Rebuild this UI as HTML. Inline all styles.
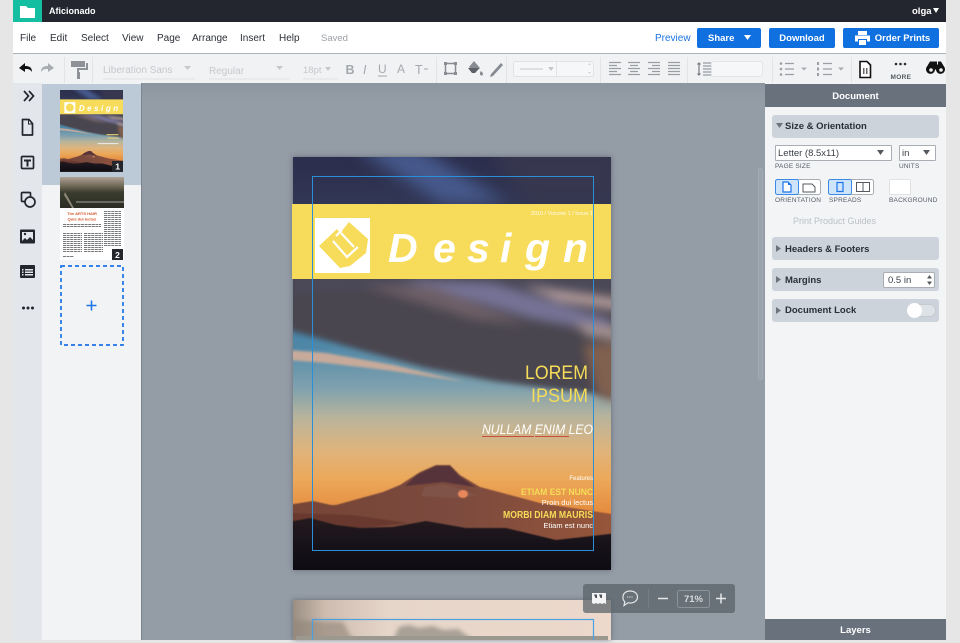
<!DOCTYPE html>
<html><head><meta charset="utf-8"><title>Aficionado</title>
<style>
html,body{margin:0;padding:0;width:960px;height:640px;overflow:hidden;background:#e6e6e6;font-family:"Liberation Sans",sans-serif}
.a{position:absolute}
.t{position:absolute;white-space:nowrap;line-height:1}
#top{left:13px;top:0;width:933px;height:22px;background:#23262f}
#menu{left:13px;top:22px;width:933px;height:31px;background:#fff;border-bottom:1px solid #b0b4b8}
#tool{left:13px;top:54px;width:933px;height:29px;background:#f1f2f4}
#rail{left:13px;top:83px;width:29px;height:557px;background:#e3e7ec}
#thumbs{left:42px;top:83px;width:100px;height:557px;background:#f1f3f5;border-right:1px solid #7d8590;box-sizing:border-box}
#canvas{left:142px;top:83px;width:623px;height:557px;background:#949ca6;overflow:hidden}
#right{left:765px;top:83px;width:181px;height:557px;background:#f2f4f6}
.btn{position:absolute;top:28px;height:20px;background:#1070e0;border-radius:2px;color:#fff;font-size:9.5px;font-weight:bold;line-height:21px;text-align:center}
.m{font-size:10px;color:#2c3038;top:34px}
.sec{position:absolute;left:772px;width:167px;height:23px;background:#ccd3da;border-radius:3px}
.sl{font-size:9.5px;font-weight:bold;color:#2a303a;left:785px}
.cap{font-size:6.5px;color:#555c66;letter-spacing:.2px}
.sel{position:absolute;background:#fff;border:1px solid #a9aeb4;box-sizing:border-box;border-radius:1px}
.ph{position:absolute;width:318px;height:413px;overflow:hidden;background:linear-gradient(#2b2e4c 0%,#3c4562 30%,#4b86a8 44%,#7fa1ae 56%,#b8b49c 63%,#dfb47c 71%,#eca85a 78%,#e58c3e 86%,#c06a30 100%)}
.ph svg{position:absolute;left:0;top:0;overflow:visible}
</style></head><body>
<div class="a" id="top"></div>
<div class="a" style="left:13px;top:0;width:29px;height:22px;background:#13bfa0"></div>
<svg class="a" style="left:19px;top:4px" width="18" height="14"><path d="M1 2h6l2 2h7v10H1z" fill="#fff"/></svg>
<div class="t" style="left:49px;top:7px;font-size:9px;font-weight:bold;color:#fff">Aficionado</div>
<div class="t" style="left:912px;top:7px;font-size:9.500px;font-weight:bold;color:#fff">olga</div>
<svg class="a" style="left:932px;top:8px" width="8" height="6"><path d="M1 0h6L4 5z" fill="#fff"/></svg>

<div class="a" id="menu"></div>
<div class="t m" style="left:20px">File</div>
<div class="t m" style="left:50px">Edit</div>
<div class="t m" style="left:81px">Select</div>
<div class="t m" style="left:122px">View</div>
<div class="t m" style="left:157px">Page</div>
<div class="t m" style="left:192px">Arrange</div>
<div class="t m" style="left:240px">Insert</div>
<div class="t m" style="left:279px">Help</div>
<div class="t m" style="left:321px;color:#9a9ea4;font-size:9.5px">Saved</div>
<div class="t m" style="left:655px;color:#1a73e0">Preview</div>
<div class="btn" style="left:697px;width:64px;text-align:left;text-indent:11px">Share</div>
<svg class="a" style="left:743px;top:35px" width="9" height="6"><path d="M1 0h7L4.500 5z" fill="#fff"/></svg>
<div class="btn" style="left:769px;width:66px">Download</div>
<div class="btn" style="left:843px;width:96px;text-indent:23px">Order Prints</div>
<svg class="a" style="left:855px;top:31px" width="15" height="14"><path d="M3 0h9v4H3zM0 4.500h15v6h-3V8H3v2.500H0zM4 9h7v5H4z" fill="#fff"/></svg>

<div class="a" id="tool"></div>
<svg class="a" style="left:0;top:54px" width="960" height="30" font-family="Liberation Sans, sans-serif">
<g stroke="#e2e4e7"><path d="M64.500 3v26M92.500 3v26M436.500 3v26M506.500 3v26M600.500 3v26M687.500 3v26M772.500 3v26M851.500 3v26"/></g>
<path d="M19 14l6-5v3c4 0 7 1 7 6-2-3-4-3-7-3v3z" fill="#111"/>
<path d="M54 14l-6-5v3c-4 0-7 1-7 6 2-3 4-3 7-3v3z" fill="#a9adb2"/>
<path d="M71 7h14v6H71zM86 9h2v7h-9v2h-2v-4h9zM77 18h3v7h-3z" fill="#8e9298"/>
<text x="103" y="19" font-size="10" fill="#c6c8cc">Liberation Sans</text>
<path d="M184 12h7l-3.500 4z" fill="#c6c8cc"/>
<path d="M103 25h92" stroke="#e0e2e5"/>
<text x="209" y="20" font-size="10" fill="#c6c8cc">Regular</text>
<path d="M276 12h7l-3.500 4z" fill="#c6c8cc"/>
<path d="M209 25h80" stroke="#e0e2e5"/>
<text x="303" y="19" font-size="9.500" fill="#c6c8cc">18pt</text>
<path d="M325 13h6l-3 4z" fill="#c6c8cc"/>
<path d="M303 25h35" stroke="#e0e2e5"/>
<text x="345.500" y="20" font-size="12.500" font-weight="bold" fill="#a5a9ae">B</text>
<text x="363" y="20" font-size="12.500" font-style="italic" fill="#a5a9ae">I</text>
<text x="378" y="19" font-size="12" fill="#a5a9ae">U</text><path d="M378 22h9" stroke="#a5a9ae"/>
<text x="397" y="19" font-size="12" fill="#a5a9ae">A</text>
<text x="415" y="20" font-size="12.500" fill="#a5a9ae">T</text><path d="M424 15h4" stroke="#a5a9ae"/>
<path d="M445.500 9.500h10v10h-10z" fill="none" stroke="#888c92" stroke-width="1.500"/><path d="M444 8h3v3h-3zM454 8h3v3h-3zM444 18h3v3h-3zM454 18h3v3h-3z" fill="#888c92"/>
<path d="M474 7l6 7-5 5-6-6zM481 17c1 1 2 2 2 3a1.500 1.500 0 0 1-3 0c0-1 0-2 1-3z" fill="#888c92"/><path d="M468 14h11l-4 5h-3z" fill="#5e6268"/>
<path d="M491 20l10-11 2 2-10 11-3 1z" fill="#888c92"/>
<rect x="513.500" y="7.500" width="80" height="15" rx="2" fill="#f6f7f8" stroke="#e0e2e5"/><path d="M556.500 8v14" stroke="#e0e2e5"/>
<path d="M520 15h23" stroke="#c4c7cb"/><path d="M548 13h6l-3 4z" fill="#c4c7cb"/>
<path d="M588 11l1.500-2 1.500 2zM588 18l1.500 2 1.500-2z" fill="#cfd2d6"/>
<g stroke="#9a9ea4" stroke-width="1.200" fill="none">
<path d="M609 9h12M609 12h8M609 15h12M609 18h8M609 21h12" transform="translate(0,-.5)"/>
<path d="M628 9h12M630 12h8M628 15h12M630 18h8M628 21h12" transform="translate(0,-.5)"/>
<path d="M648 9h12M652 12h8M648 15h12M652 18h8M648 21h12" transform="translate(0,-.5)"/>
<path d="M668 9h12M668 12h12M668 15h12M668 18h12M668 21h12" transform="translate(0,-.5)"/>
<path d="M703 9h9M703 12h9M703 15h9M703 18h9M703 21h9"/>
<path d="M699 9v12M697.500 10.500L699 9l1.500 1.500M697.500 19.500L699 21l1.500-1.500" stroke="#777b82"/>
<path d="M785 9.500h9M785 15h9M785 20.500h9M823 9.500h9M823 15h9M823 20.500h9"/>
</g>
<rect x="711.500" y="7.500" width="51" height="15" rx="2" fill="#f6f7f8" stroke="#e4e6e9"/>
<g fill="#9a9ea4"><circle cx="781" cy="9.500" r="1.300"/><circle cx="781" cy="15" r="1.300"/><circle cx="781" cy="20.500" r="1.300"/><rect x="817" y="8" width="2" height="3"/><rect x="817" y="13.500" width="2" height="3"/><rect x="817" y="19" width="2" height="3"/></g>
<path d="M801 13.500h6l-3 3zM838 13.500h6l-3 3z" fill="#a9adb2"/>
<path d="M860 7.500h7l3.500 3.500v12.500H860z" fill="#fff" stroke="#111" stroke-width="1.600"/><path d="M863 14h1.500v6H863zM866 14h1.500v6H866z" fill="#666"/>
<g fill="#2a2d33"><circle cx="896" cy="10" r="1.300"/><circle cx="900.500" cy="10" r="1.300"/><circle cx="905" cy="10" r="1.300"/></g>
<text x="890.500" y="25" font-size="6.500" font-weight="bold" fill="#555a61" letter-spacing=".3">MORE</text>
<path d="M931 8h3v3h1V8h3l3 5a4.500 4.500 0 1 1-8 3h-1a4.500 4.500 0 1 1-8-3l3-5z" fill="#111" transform="translate(3,-.5)"/>
<circle cx="931" cy="17" r="1.800" fill="#f1f2f4" transform="translate(0,-1)"/><circle cx="941" cy="17" r="1.800" fill="#f1f2f4" transform="translate(0,-1)"/>
</svg>

<div class="a" id="canvas"></div>
<div class="a" style="left:142px;top:83px;width:623px;height:18px;background:linear-gradient(#8d95a0,#949ca6)"></div>
<div class="a" id="rail"></div>
<svg class="a" style="left:13px;top:83px" width="29" height="240">
<g fill="none" stroke="#23262d" stroke-width="1.700">
<path d="M11 8l4.500 5-4.500 5M16 8l4.500 5-4.500 5"/>
<path d="M9.500 36.500h6.500l3.500 4v11.500H9.500z" stroke-linejoin="round"/><path d="M15.500 36.500v4.500h4" stroke-width="1"/>
<rect x="8.500" y="73.500" width="12" height="12" rx="1"/>
<rect x="8.500" y="109.500" width="9" height="9" rx="1"/>
<circle cx="17" cy="119" r="5" fill="#e3e7ec"/>
</g>
<path d="M11 76.500h7v2h-2.500v5h-2v-5H11z" fill="#23262d"/>
<path d="M8 146.500h13a1 1 0 0 1 1 1v12a1 1 0 0 1-1 1H8a1 1 0 0 1-1-1v-12a1 1 0 0 1 1-1z" fill="#23262d"/>
<path d="M9 149h11v8l-3-3-3 3-2-2-3 3z" fill="#e3e7ec"/><circle cx="12" cy="151" r="1.200" fill="#23262d"/>
<path d="M8 182h13a1 1 0 0 1 1 1v11a1 1 0 0 1-1 1H8a1 1 0 0 1-1-1v-11a1 1 0 0 1 1-1z" fill="#23262d"/>
<path d="M9 186h1.500v1.500H9zM12 186h8v1.500h-8zM9 188.500h1.500v1.500H9zM12 188.500h8v1.500h-8zM9 191h1.500v1.500H9zM12 191h8v1.500h-8z" fill="#e3e7ec"/>
<g fill="#23262d"><circle cx="10.500" cy="225" r="1.500"/><circle cx="15" cy="225" r="1.500"/><circle cx="19.500" cy="225" r="1.500"/></g>
</svg>

<div class="a" id="thumbs"></div>
<div class="a" style="left:42px;top:84px;width:99px;height:101px;background:#bccad8"></div>

<svg class="a" style="left:0;top:0" width="0" height="0">
<defs>
<linearGradient id="mt" x1="0" y1="0" x2="1" y2="0"><stop offset="0" stop-color="#774537"/><stop offset=".5" stop-color="#7c4a3e"/><stop offset="1" stop-color="#96563a"/></linearGradient>
<linearGradient id="ridge" gradientUnits="userSpaceOnUse" x1="0" y1="361" x2="0" y2="413"><stop offset="0" stop-color="#251a1e"/><stop offset=".5" stop-color="#17121a"/><stop offset="1" stop-color="#0e0c12"/></linearGradient>
<g id="far"><path d="M60 -10L125 -10L215 47H150z" fill="#46598c"/><path d="M195 -10h130v57H235z" fill="#37374f"/></g>
<g id="cloud"><path d="M-30 110H350V241L317 238L267 233L200 224L133 211L67 193L0 174L-30 165z" fill="#4a464f"/></g>
<g id="bands">
<path d="M-10 120H330V132L200 140L60 132L-10 138z" fill="#4b4959"/>
<path d="M105 122L200 126L318 162V176L240 162z" fill="#757295"/>
<path d="M70 128L140 130L235 168L180 162z" fill="#6e5f66"/>
<path d="M230 128L330 142V154L265 144z" fill="#b39c9c"/>
<path d="M280 166L330 170V184L295 179z" fill="#a69290"/>
<path d="M290 188L340 184V248L305 240z" fill="#80604f"/>
</g>
<g id="streak">
<path d="M-5 193L33 196L100 208L172 225L100 214L33 206L-5 203z" fill="#c8aa9a"/>
<path d="M-5 181L40 192L-5 192z" fill="#4f86a6"/>
</g>
<g id="mount">
<path d="M-5 348L20 344L38 348L43 348L90 335L107 328L127 315L143 308L157 308L167 318L187 330L217 338L247 346L325 358V420H-5z" fill="url(#mt)"/>
<path d="M124 318L143 309L157 309L166 319L182 330L150 325L112 329z" fill="#56333a"/>
<path d="M132 330L150 327L172 333L184 339L160 341L128 339z" fill="#7f5348"/>
<path d="M-5 356L60 358L115 366L60 372H-5z" fill="#69392f"/>
<ellipse cx="170" cy="337" rx="5" ry="4" fill="#e8875a"/>
<path d="M-5 365L17 361L43 368L67 371L100 370L133 364L173 371L213 371L263 383L325 376V420H-5z" fill="url(#ridge)"/>
</g>
</defs>
</svg>

<!-- thumb 1 -->
<div class="a" style="left:60px;top:90px;width:63px;height:82px;overflow:hidden">
<div class="ph" style="left:0;top:0;transform:scale(.1981);transform-origin:0 0">
<svg width="318" height="413" style="filter:blur(8px)"><use href="#far"/></svg>
<svg width="318" height="413" style="filter:blur(3px)"><use href="#cloud"/></svg>
<svg width="318" height="413" style="filter:blur(5px)"><use href="#bands"/></svg>
<svg width="318" height="413" style="filter:blur(1.2px)"><use href="#streak"/></svg>
<svg width="318" height="413" style="filter:blur(.6px)"><use href="#mount"/></svg>
</div>
<svg class="a" style="left:0;top:0" width="63" height="82" viewBox="0 0 318 413">
<rect y="47" width="318" height="75" fill="#f7dc5c"/>
<rect x="22" y="61" width="55" height="55" fill="#fff"/>
<circle cx="50" cy="88" r="20" fill="#f7dc5c"/>
<text x="95" y="106" font-size="40" font-weight="bold" font-style="italic" fill="#fff" letter-spacing="13">Design</text>
<rect x="262" y="358" width="56" height="55" fill="#24262c"/>
<text x="279" y="402" font-size="44" font-weight="bold" fill="#fff">1</text>
<path d="M235 225h60M240 242h55" stroke="#e6d070" stroke-width="6"/><path d="M190 270h105" stroke="#eee" stroke-width="5"/>
</svg>
</div>
<!-- thumb 2 -->
<svg class="a" style="left:60px;top:177px" width="64" height="83" viewBox="0 0 64 83">
<rect width="64" height="83" fill="#fff"/>
<defs><linearGradient id="f2" x1="0" y1="0" x2="0" y2="1"><stop offset="0" stop-color="#b0a294"/><stop offset=".3" stop-color="#6d6655"/><stop offset=".5" stop-color="#3a3c2e"/><stop offset="1" stop-color="#2b2d24"/></linearGradient></defs>
<rect width="64" height="31" fill="url(#f2)"/>
<path d="M16 24h48v2H16z" fill="#6b6a60"/><path d="M5 15L14 31h-2L4 18z" fill="#8c8676"/>
<text x="22" y="38" font-size="4" fill="#d6582a" text-anchor="middle" font-weight="bold">The ARTS HAIR</text>
<text x="22" y="43.500" font-size="4" fill="#d6582a" text-anchor="middle" font-weight="bold">Quis dui lectus</text>
<g stroke="#55585c" stroke-width="1" stroke-dasharray="3 .6" opacity=".8">
<path d="M3 47.500h38M3 49.500h38M3 56.500h19M3 58.500h19M3 60.500h19M3 62.500h19M3 64.500h19M3 66.500h19M3 68.500h19M3 70.500h19M3 72.500h19M3 74.500h19M24 56.500h19M24 58.500h19M24 60.500h19M24 62.500h19M24 64.500h19M24 66.500h19M24 68.500h19M24 70.500h19M24 72.500h19M24 74.500h19M44 34.500h17M44 36.500h17M44 38.500h17M44 40.500h17M44 42.500h17M44 44.500h17M44 46.500h17M44 48.500h17M44 50.500h17M44 52.500h17M44 54.500h17M44 56.500h17M44 58.500h17M44 60.500h17M44 62.500h17M44 64.500h17M44 66.500h17M44 68.500h17M3 79.500h11"/>
</g>
<rect x="52" y="72" width="11" height="11" fill="#24262c"/>
<text x="57.500" y="81" font-size="8.500" font-weight="bold" fill="#fff" text-anchor="middle">2</text>
</svg>
<!-- add page -->
<svg class="a" style="left:60px;top:265px" width="64" height="81">
<rect x="1" y="1" width="62" height="79" fill="none" stroke="#1a73e8" stroke-width="1.700" stroke-dasharray="4 3"/>
<path d="M26.500 40.500h10M31.500 35.500v10" stroke="#1a73e8" stroke-width="1.500"/>
</svg>

<!-- scrollbar -->
<div class="a" style="left:758px;top:168px;width:5px;height:212px;background:#9aa2ac;border-radius:3px;border:1px solid #a4abb4;box-sizing:border-box"></div>

<!-- cover -->
<div class="a" style="left:293px;top:157px;width:318px;height:413px;box-shadow:0 0 5px rgba(60,66,75,.55)"></div>
<div class="ph" style="left:293px;top:157px">
<svg width="318" height="413" style="filter:blur(8px)"><use href="#far"/></svg>
<svg width="318" height="413" style="filter:blur(3px)"><use href="#cloud"/></svg>
<svg width="318" height="413" style="filter:blur(5px)"><use href="#bands"/></svg>
<svg width="318" height="413" style="filter:blur(1.2px)"><use href="#streak"/></svg>
<svg width="318" height="413" style="filter:blur(.6px)"><use href="#mount"/></svg>
</div>
<svg class="a" style="left:292px;top:157px" width="320" height="414" font-family="Liberation Sans, sans-serif">
<rect x="0" y="47" width="319" height="75" fill="#f7dc5c"/>
<rect x="23" y="61" width="55" height="55" fill="#fff"/>
<path d="M27 89L45 72L48 76L53 70L57 65L76 82L74 96L58 109L48 111z" fill="#f7dc5c"/>
<path d="M41 84L55 100L66 90M49 76L62 90M44 79L50 73" stroke="#fff" stroke-width="2.200" fill="none"/>
<text x="96 141 175 208 233 271" y="105" font-size="41" font-weight="bold" font-style="italic" fill="#fff">Design</text>
<text x="301" y="58" font-size="5.500" fill="#fff" fill-opacity=".85" text-anchor="end">2016 / Volume 1 / Issue 1</text>
<text x="233" y="222" font-size="19.500" fill="#f6dc58" textLength="63" lengthAdjust="spacingAndGlyphs">LOREM</text>
<text x="239" y="245" font-size="19.500" fill="#f6dc58" textLength="57" lengthAdjust="spacingAndGlyphs">IPSUM</text>
<text x="190" y="277" font-size="13.500" font-style="italic" fill="#fff" textLength="111" lengthAdjust="spacingAndGlyphs">NULLAM ENIM LEO</text>
<path d="M190 279.500h52M243 279.500h34" stroke="#c8503c" stroke-width="1"/>
<text x="301" y="323" font-size="6" fill="#fff" text-anchor="end">Features</text>
<text x="229" y="338" font-size="9.500" font-weight="bold" fill="#f6dc58" textLength="72" lengthAdjust="spacingAndGlyphs">ETIAM EST NUNC</text>
<text x="301" y="348" font-size="7.500" fill="#fff" text-anchor="end">Proin dui lectus</text>
<text x="211" y="361" font-size="10" font-weight="bold" fill="#f6dc58" textLength="90" lengthAdjust="spacingAndGlyphs">MORBI DIAM MAURIS</text>
<text x="301" y="371" font-size="7.500" fill="#fff" text-anchor="end">Etiam est nunc</text>
<rect x="20.500" y="19.500" width="281" height="374" fill="none" stroke="#2a8fd8" stroke-width="1"/>
</svg>

<!-- second page -->
<div class="a" style="left:293px;top:600px;width:318px;height:40px;box-shadow:0 0 5px rgba(60,66,75,.55)"></div>
<div class="a" style="left:293px;top:600px;width:318px;height:40px;overflow:hidden;background:linear-gradient(90deg,#9a8e82 0%,#cdbcaf 10%,#e6d5c9 30%,#ecd9cc 100%)">
<svg class="a" style="left:0;top:0;overflow:visible;filter:blur(2px)" width="318" height="40">
<path d="M100 40L106 27L116 25L126 28L140 26L150 30L165 29L180 40z" fill="#a89f95"/>
<path d="M0 20L50 22L60 40H0z" fill="#8f8478" fill-opacity=".6"/>
</svg>
</div>
<svg class="a" style="left:293px;top:600px" width="318" height="40">
<rect x="3" y="36" width="312" height="4" fill="#9b9890"/>
<rect x="19.500" y="19.500" width="281" height="30" fill="none" stroke="#4aa0e0" stroke-width="1.200"/>
</svg>

<!-- zoom bar -->
<div class="a" style="left:583px;top:584px;width:152px;height:29px;background:rgba(88,95,103,.72);border-radius:3px"></div>
<svg class="a" style="left:583px;top:584px" width="152" height="29" font-family="Liberation Sans, sans-serif">
<path d="M9 9h14v11l-2 -1-2 1-2-1-2 1-2-1-2 1-2-1z" fill="#f4f4f4"/><path d="M11 10.500h3v3.500h-1.500zM16 10.500h3v3.500h-1.500z" fill="#4d525a"/>
<path d="M47 7c4.500 0 7.500 2.500 7.500 6s-3 6-7.500 6c-.7 0-1.400 0-2-.2L41 21.500l.8-4C40 16.500 40 15 40 13c0-3.500 3-6 7-6z" fill="none" stroke="#e4e6e8" stroke-width="1.200"/>
<path d="M44 13h6" stroke="#e4e6e8" stroke-dasharray="1.200 1"/>
<path d="M65.500 5v19" stroke="#777d85"/>
<path d="M75 14.500h10" stroke="#e4e6e8" stroke-width="1.500"/>
<rect x="94.500" y="6.500" width="32" height="17" rx="2" fill="none" stroke="#8d939a"/>
<text x="110.500" y="18" font-size="9.500" font-weight="bold" fill="#d8dbde" text-anchor="middle">71%</text>
<path d="M133 14.500h10M138 9.500v10" stroke="#e4e6e8" stroke-width="1.500"/>
</svg>

<!-- right panel -->
<div class="a" id="right"></div>
<div class="a" style="left:765px;top:84px;width:181px;height:23px;background:#69717d;color:#fff;font-size:9.500px;font-weight:bold;line-height:25px;text-align:center">Document</div>
<div class="sec" style="top:115px"></div>
<svg class="a" style="left:776px;top:123px" width="8" height="6"><path d="M0 0h7L3.500 5z" fill="#6d747d"/></svg>
<div class="t sl" style="top:122px">Size &amp; Orientation</div>
<div class="sel" style="left:775px;top:145px;width:117px;height:16px"></div>
<div class="t" style="left:778px;top:148.500px;font-size:9.500px;color:#3a3e45">Letter (8.5x11)</div>
<svg class="a" style="left:877px;top:150px" width="8" height="6"><path d="M0 0h7L3.500 5z" fill="#555a61"/></svg>
<div class="sel" style="left:899px;top:145px;width:37px;height:16px"></div>
<div class="t" style="left:902px;top:148.500px;font-size:9.500px;color:#3a3e45">in</div>
<svg class="a" style="left:923px;top:150px" width="8" height="6"><path d="M0 0h7L3.500 5z" fill="#555a61"/></svg>
<div class="t cap" style="left:775px;top:164px">PAGE SIZE</div>
<div class="t cap" style="left:899px;top:164px">UNITS</div>
<svg class="a" style="left:775px;top:179px" width="140" height="17">
<rect x=".5" y=".5" width="45" height="15" rx="2" fill="#fff" stroke="#a9aeb4"/>
<rect x=".5" y=".5" width="23" height="15" rx="2" fill="#cde4fb" stroke="#3a8ae6"/>
<path d="M8 3h5l3 3v7H8z" fill="#fff" stroke="#1a73e8" stroke-width="1.200"/><path d="M13 3v3h3z" fill="#1a73e8"/>
<path d="M28 5h9l3 3v5H28z" fill="#fff" stroke="#555a61"/>
<rect x="53.500" y=".5" width="45" height="15" rx="2" fill="#fff" stroke="#a9aeb4"/>
<rect x="53.500" y=".5" width="23" height="15" rx="2" fill="#cde4fb" stroke="#3a8ae6"/>
<rect x="62" y="3.500" width="6" height="9" fill="none" stroke="#1a73e8" stroke-width="1.200"/>
<rect x="81.500" y="3.500" width="13" height="9" fill="none" stroke="#555a61"/><path d="M88 3.500v9" stroke="#555a61"/>
<rect x="114.500" y=".5" width="21" height="15" fill="#fff" stroke="#e0e3e6"/>
</svg>
<div class="t cap" style="left:775px;top:198px;letter-spacing:.25px">ORIENTATION</div>
<div class="t cap" style="left:829px;top:198px">SPREADS</div>
<div class="t cap" style="left:889px;top:198px">BACKGROUND</div>
<div class="t" style="left:793px;top:217px;font-size:9px;color:#bcc0c5">Print Product Guides</div>

<div class="sec" style="top:237px"></div>
<svg class="a" style="left:776px;top:245px" width="6" height="8"><path d="M0 0v7l5-3.500z" fill="#6d747d"/></svg>
<div class="t sl" style="top:245px">Headers &amp; Footers</div>
<div class="sec" style="top:268px"></div>
<svg class="a" style="left:776px;top:276px" width="6" height="8"><path d="M0 0v7l5-3.500z" fill="#6d747d"/></svg>
<div class="t sl" style="top:276px">Margins</div>
<div class="sel" style="left:883px;top:272px;width:52px;height:16px;border-radius:2px"></div>
<div class="t" style="left:888px;top:275.500px;font-size:9.500px;color:#3a3e45">0.5 in</div>
<svg class="a" style="left:926px;top:274px" width="7" height="12"><path d="M3.500 1L6 4.500H1zM3.500 11L6 7.500H1z" fill="#555a61"/></svg>
<div class="sec" style="top:299px"></div>
<svg class="a" style="left:776px;top:307px" width="6" height="8"><path d="M0 0v7l5-3.500z" fill="#6d747d"/></svg>
<div class="t sl" style="top:306px">Document Lock</div>
<div class="a" style="left:908px;top:304px;width:28px;height:13px;background:#dde2e7;border:1px solid #c4cad0;box-sizing:border-box;border-radius:7px"></div>
<div class="a" style="left:907px;top:303px;width:15px;height:15px;background:#fff;border-radius:50%"></div>
<div class="a" style="left:765px;top:619px;width:181px;height:21px;background:#69717d;color:#fff;font-size:9.500px;font-weight:bold;line-height:24px;text-align:center">Layers</div>
</body></html>
